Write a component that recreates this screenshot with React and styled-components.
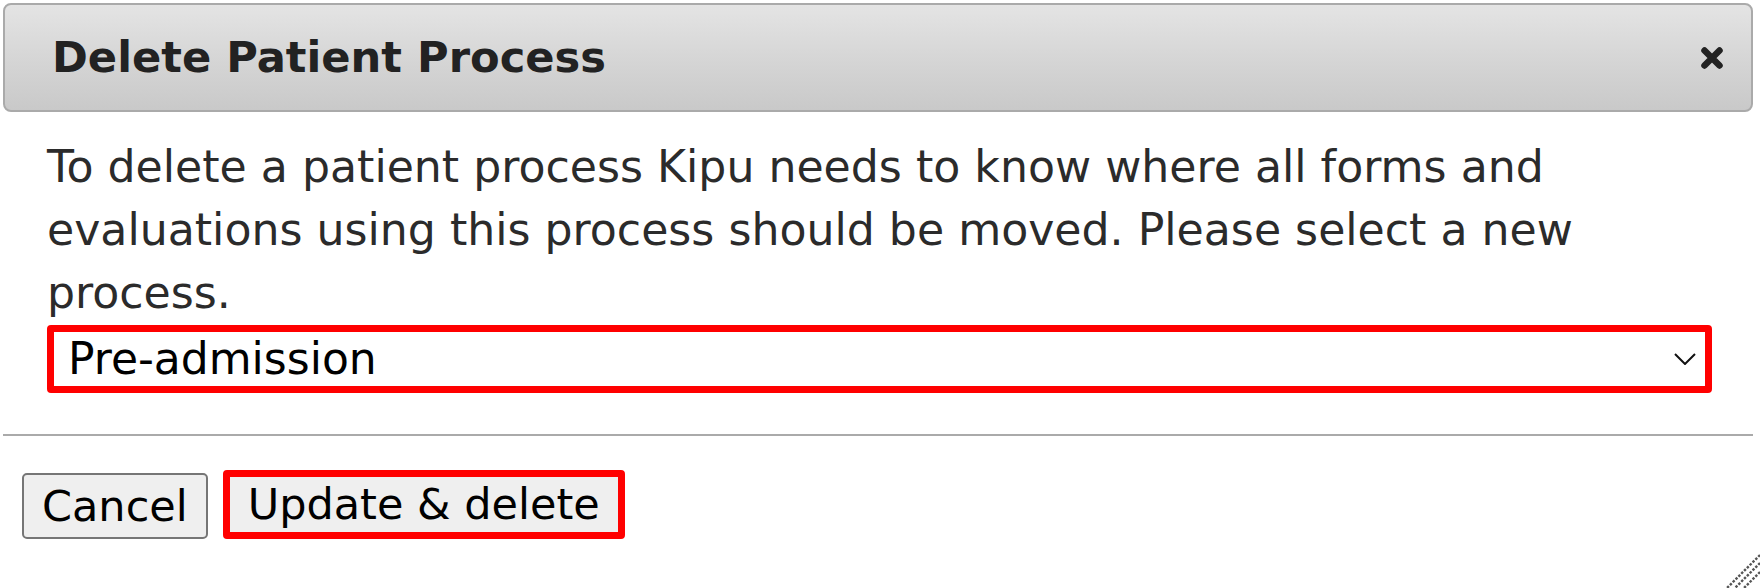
import React from 'react'
import styled, { createGlobalStyle } from 'styled-components'

const GlobalStyle = createGlobalStyle`
  html, body {
    margin: 0;
    padding: 0;
    background: #fff;
  }
  body {
    font-family: 'DejaVu Sans', Verdana, sans-serif;
  }
`

const Dialog = styled.div`
  position: relative;
  box-sizing: border-box;
  width: 1760px;
  height: 588px;
  padding: 3px 7px 0 3px;
  display: flex;
  flex-direction: column;
  background: #fff;
  overflow: hidden;
`

const TitleBar = styled.div`
  box-sizing: border-box;
  height: 109px;
  display: flex;
  align-items: center;
  justify-content: space-between;
  padding: 0 26px 0 47px;
  border: 2px solid #aaa;
  border-radius: 8px;
  background: linear-gradient(to bottom, #e4e4e4 0%, #d6d6d6 50%, #c9c9c9 100%);
`

const Title = styled.h1`
  margin: 0;
  font-size: 43.2px;
  font-weight: 700;
  color: #222;
  line-height: 1;
`

const CloseButton = styled.button`
  width: 26px;
  height: 26px;
  padding: 0;
  margin: 0;
  border: 0;
  background: transparent;
  display: flex;
  align-items: center;
  justify-content: center;
  cursor: pointer;
`

const Content = styled.div`
  padding: 24px 41px 41px 44px;
`

const Message = styled.p`
  margin: 0;
  font-size: 44.2px;
  line-height: 62.86px;
  color: #2b2b2b;
`

const SelectBox = styled.div`
  box-sizing: border-box;
  height: 68px;
  display: flex;
  align-items: center;
  justify-content: space-between;
  padding: 0 9px 0 14px;
  border: 7px solid #ff0000;
  border-radius: 4px;
  background: #fff;
  font-size: 44px;
  color: #000;
`

const Divider = styled.hr`
  margin: 0;
  border: 0;
  height: 2px;
  background: #aaa;
`

const ButtonRow = styled.div`
  display: flex;
  align-items: flex-end;
  gap: 15px;
  padding: 34px 0 0 19px;
`

const Button = styled.button`
  box-sizing: border-box;
  height: ${(props) => (props.highlight ? '69px' : '66px')};
  padding: 0 ${(props) => (props.highlight ? '18px' : '18px')};
  border: ${(props) => (props.highlight ? '7px solid #ff0000' : '2px solid #767676')};
  border-radius: ${(props) => (props.highlight ? '4px' : '5px')};
  background: #efefef;
  font-family: 'DejaVu Sans', Verdana, sans-serif;
  font-size: 43px;
  color: #000;
  cursor: pointer;
`

const Grip = styled.div`
  position: absolute;
  right: 0;
  bottom: 0;
  width: 34px;
  height: 34px;
`

const CloseIcon = () => (
  <svg width="24" height="24" viewBox="0 0 24 24">
    <path
      d="M4.5 4.5 L19.5 19.5 M19.5 4.5 L4.5 19.5"
      stroke="#222"
      strokeWidth="6.5"
      strokeLinecap="round"
    />
  </svg>
)

const Chevron = () => (
  <svg width="22" height="12" viewBox="0 0 22 12">
    <path d="M1 1 L11 11 L21 1" fill="none" stroke="#111" strokeWidth="2" />
  </svg>
)

const GripIcon = () => (
  <svg width="34" height="34" viewBox="0 0 34 34">
    {[1, 9, 18].map((o) => (
      <line
        key={o}
        x1={34}
        y1={o}
        x2={o}
        y2={34}
        stroke="#555"
        strokeWidth="2.4"
        strokeDasharray="2.5 1.5"
      />
    ))}
  </svg>
)

export default function App() {
  return (
    <>
      <GlobalStyle />
      <Dialog>
        <TitleBar>
          <Title>Delete Patient Process</Title>
          <CloseButton aria-label="Close">
            <CloseIcon />
          </CloseButton>
        </TitleBar>
        <Content>
          <Message>
            To delete a patient process Kipu needs to know where all forms and
            evaluations using this process should be moved. Please select a new
            process.
          </Message>
          <SelectBox role="listbox">
            <span>Pre-admission</span>
            <Chevron />
          </SelectBox>
        </Content>
        <Divider />
        <ButtonRow>
          <Button>Cancel</Button>
          <Button highlight>Update &amp; delete</Button>
        </ButtonRow>
        <Grip>
          <GripIcon />
        </Grip>
      </Dialog>
    </>
  )
}
